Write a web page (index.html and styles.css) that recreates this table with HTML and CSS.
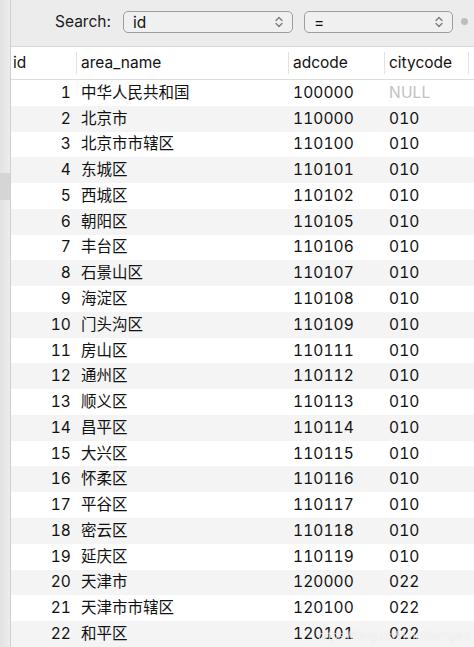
FILE: index.html
```html
<!DOCTYPE html>
<html>
<head>
<meta charset="utf-8">
<link rel="stylesheet" href="styles.css">
</head>
<body>
<div class="app">
  <div class="sidebar"><div class="sel-block"></div></div>
  <div class="main">
    <div class="toolbar">
      <span class="label">Search:</span>
      <div class="select s1"><span>id</span>
        <svg class="chev" width="10" height="14" viewBox="0 0 10 14"><path d="M2 5.5 L5 2.5 L8 5.5 M2 8.5 L5 11.5 L8 8.5" fill="none" stroke="#7a7a7a" stroke-width="1.3" stroke-linecap="round" stroke-linejoin="round"/></svg>
      </div>
      <div class="select s2"><span>=</span>
        <svg class="chev" width="10" height="14" viewBox="0 0 10 14"><path d="M2 5.5 L5 2.5 L8 5.5 M2 8.5 L5 11.5 L8 8.5" fill="none" stroke="#7a7a7a" stroke-width="1.3" stroke-linecap="round" stroke-linejoin="round"/></svg>
      </div>
      <span class="dot"></span>
    </div>
    <div class="table">
      <div class="row head">
        <div class="c cid">id</div>
        <div class="c cname">area_name</div>
        <div class="c ccode">adcode</div>
        <div class="c ccity">citycode</div>
        <div class="c crest"></div>
      </div>
      <div class="row"><div class="c cid">1</div><div class="c cname">中华人民共和国</div><div class="c ccode">100000</div><div class="c ccity null">NULL</div><div class="c crest"></div></div>
      <div class="row"><div class="c cid">2</div><div class="c cname">北京市</div><div class="c ccode">110000</div><div class="c ccity">010</div><div class="c crest"></div></div>
      <div class="row"><div class="c cid">3</div><div class="c cname">北京市市辖区</div><div class="c ccode">110100</div><div class="c ccity">010</div><div class="c crest"></div></div>
      <div class="row"><div class="c cid">4</div><div class="c cname">东城区</div><div class="c ccode">110101</div><div class="c ccity">010</div><div class="c crest"></div></div>
      <div class="row"><div class="c cid">5</div><div class="c cname">西城区</div><div class="c ccode">110102</div><div class="c ccity">010</div><div class="c crest"></div></div>
      <div class="row"><div class="c cid">6</div><div class="c cname">朝阳区</div><div class="c ccode">110105</div><div class="c ccity">010</div><div class="c crest"></div></div>
      <div class="row"><div class="c cid">7</div><div class="c cname">丰台区</div><div class="c ccode">110106</div><div class="c ccity">010</div><div class="c crest"></div></div>
      <div class="row"><div class="c cid">8</div><div class="c cname">石景山区</div><div class="c ccode">110107</div><div class="c ccity">010</div><div class="c crest"></div></div>
      <div class="row"><div class="c cid">9</div><div class="c cname">海淀区</div><div class="c ccode">110108</div><div class="c ccity">010</div><div class="c crest"></div></div>
      <div class="row"><div class="c cid">10</div><div class="c cname">门头沟区</div><div class="c ccode">110109</div><div class="c ccity">010</div><div class="c crest"></div></div>
      <div class="row"><div class="c cid">11</div><div class="c cname">房山区</div><div class="c ccode">110111</div><div class="c ccity">010</div><div class="c crest"></div></div>
      <div class="row"><div class="c cid">12</div><div class="c cname">通州区</div><div class="c ccode">110112</div><div class="c ccity">010</div><div class="c crest"></div></div>
      <div class="row"><div class="c cid">13</div><div class="c cname">顺义区</div><div class="c ccode">110113</div><div class="c ccity">010</div><div class="c crest"></div></div>
      <div class="row"><div class="c cid">14</div><div class="c cname">昌平区</div><div class="c ccode">110114</div><div class="c ccity">010</div><div class="c crest"></div></div>
      <div class="row"><div class="c cid">15</div><div class="c cname">大兴区</div><div class="c ccode">110115</div><div class="c ccity">010</div><div class="c crest"></div></div>
      <div class="row"><div class="c cid">16</div><div class="c cname">怀柔区</div><div class="c ccode">110116</div><div class="c ccity">010</div><div class="c crest"></div></div>
      <div class="row"><div class="c cid">17</div><div class="c cname">平谷区</div><div class="c ccode">110117</div><div class="c ccity">010</div><div class="c crest"></div></div>
      <div class="row"><div class="c cid">18</div><div class="c cname">密云区</div><div class="c ccode">110118</div><div class="c ccity">010</div><div class="c crest"></div></div>
      <div class="row"><div class="c cid">19</div><div class="c cname">延庆区</div><div class="c ccode">110119</div><div class="c ccity">010</div><div class="c crest"></div></div>
      <div class="row"><div class="c cid">20</div><div class="c cname">天津市</div><div class="c ccode">120000</div><div class="c ccity">022</div><div class="c crest"></div></div>
      <div class="row"><div class="c cid">21</div><div class="c cname">天津市市辖区</div><div class="c ccode">120100</div><div class="c ccity">022</div><div class="c crest"></div></div>
      <div class="row"><div class="c cid">22</div><div class="c cname">和平区</div><div class="c ccode">120101</div><div class="c ccity">022</div><div class="c crest"></div></div>
    </div>
  </div>
</div>
<div class="watermark">https://blog.csdn.net/MrSpirit</div>
</body>
</html>
```
FILE: styles.css
```css
html, body {
  margin: 0;
  padding: 0;
  background: #ffffff;
  overflow: hidden;
}
body {
  font-family: "Inter", "Noto Sans CJK SC", sans-serif;
  font-size: 15.5px;
  color: #111111;
  position: relative;
}
.app {
  display: flex;
  height: 647px;
}
.sidebar {
  width: 11px;
  flex: none;
  background: linear-gradient(to right, #e2e2e2, #ededed);
  border-right: 1px solid #cfcfcf;
  display: flex;
  flex-direction: column;
  padding-top: 173px;
  box-sizing: border-box;
}
.sel-block {
  height: 27px;
  background: #d5d5d5;
}
.main {
  flex: 1;
  display: flex;
  flex-direction: column;
  min-width: 0;
}
.toolbar {
  height: 47px;
  flex: none;
  box-sizing: border-box;
  background: #ececec;
  border-bottom: 1px solid #d8d8d8;
  display: flex;
  align-items: flex-start;
  padding-left: 44px;
  padding-top: 11px;
}
.label {
  font-size: 15.5px;
  line-height: 22px;
  color: #1a1a1a;
  margin-right: 12px;
}
.select {
  height: 22px;
  box-sizing: border-box;
  border: 1px solid #9e9e9e;
  border-radius: 5px;
  background: #f0f0f0;
  display: flex;
  align-items: center;
  justify-content: space-between;
  padding: 0 8px 0 9px;
  font-size: 15.5px;
  color: #111;
}
.s1 { width: 170px; margin-right: 11px; }
.s2 { width: 149px; margin-right: 8px; }
.chev { display: block; }
.dot {
  width: 7px;
  height: 7px;
  border-radius: 50%;
  background: #bdbdbd;
  margin-top: 7px;
}
.table {
  display: flex;
  flex-direction: column;
}
.row {
  display: grid;
  grid-template-columns: 66px 212px 96px 84px 1fr;
  height: 25.77px;
  align-items: center;
}
.row:nth-child(odd) { background: #f4f4f4; }
.row.head {
  height: 33px;
  background: #ffffff;
  border-bottom: 1px solid #dcdcdc;
  box-sizing: border-box;
}
.c {
  white-space: nowrap;
  overflow: hidden;
  padding-left: 4px;
  line-height: 20px;
}
.ccode, .ccity, .cid {
  font-variant-numeric: tabular-nums;
  letter-spacing: 0.1px;
}
.cid {
  text-align: right;
  padding-right: 6px;
  padding-left: 0;
}
.head .c {
  border-right: 1px solid #e2e2e2;
  height: 22px;
  line-height: 22px;
  box-sizing: border-box;
  letter-spacing: 0;
}
.head .cid {
  text-align: left;
  padding-left: 2px;
}
.head .crest { border-right: none; }
.null { color: #c2c2c2; letter-spacing: 0.2px; }
.watermark {
  position: absolute;
  right: 4px;
  bottom: 4px;
  font-family: "Liberation Sans", sans-serif;
  font-size: 12px;
  color: rgba(255, 255, 255, 0.75);
  text-shadow: 0 0 1px rgba(0, 0, 0, 0.12);
  pointer-events: none;
}
```
